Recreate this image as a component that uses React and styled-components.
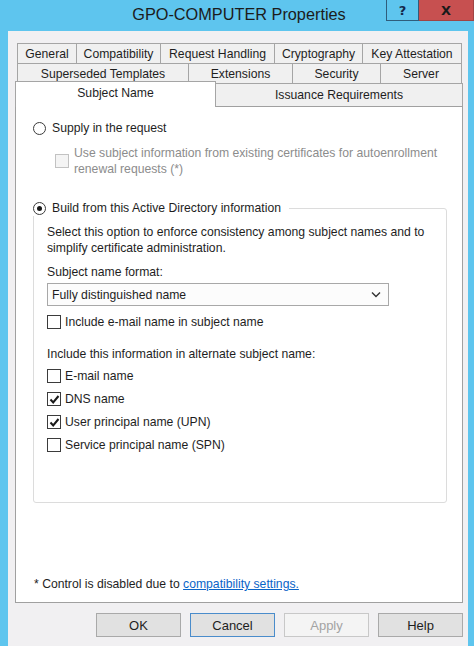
import React from 'react';
import styled, { createGlobalStyle } from 'styled-components';

const GlobalStyle = createGlobalStyle`
  html, body {
    margin: 0;
    padding: 0;
    background: #5ec5ee;
  }
  * {
    box-sizing: border-box;
  }
`;

const font = `"Liberation Sans", Arial, sans-serif`;

const Frame = styled.div`
  width: 474px;
  height: 646px;
  overflow: hidden;
  background: #5ec5ee;
  display: flex;
  flex-direction: column;
  padding-left: 8px;
  font-family: ${font};
  color: #1e1e1e;
`;

const TitleBar = styled.div`
  height: 31px;
  display: grid;
  grid-template-columns: 1fr auto 1fr;
  align-items: start;
  margin-left: -8px;
`;

const Title = styled.div`
  grid-column: 2;
  font-size: 16.3px;
  line-height: 29px;
  color: #1c1c1c;
  padding-left: 4px;
`;

const CaptionButtons = styled.div`
  grid-column: 3;
  justify-self: end;
  display: flex;
`;

const CaptionButton = styled.div`
  width: ${(p) => p.$w}px;
  height: 21px;
  display: flex;
  align-items: center;
  justify-content: center;
  font-family: "DejaVu Sans", sans-serif;
  font-weight: bold;
  font-size: 13px;
  background: ${(p) => (p.$close ? '#c75050' : '#5ec5ee')};
  color: ${(p) => (p.$close ? '#1a1a1a' : '#14284a')};
  border: 1px solid ${(p) => (p.$close ? '#a04444' : '#2f5d7c')};
  border-top: none;
  border-left: ${(p) => (p.$close ? 'none' : '1px solid #2f5d7c')};
`;

const Body = styled.div`
  flex: 1;
  width: 460px;
  background: #f1f0f2;
  padding: 12px 5px 0 7px;
  display: flex;
  flex-direction: column;
  font-size: 12.2px;
`;

const TabStrip = styled.div`
  margin-left: 2px;
  width: 446px;
  display: flex;
  flex-direction: column;
`;

const TabRow = styled.div`
  display: flex;
  height: ${(p) => p.$h || 20}px;
  align-items: flex-end;
`;

const Tab = styled.div`
  width: ${(p) => p.$w}px;
  height: ${(p) => p.$h || 20}px;
  margin-left: -1px;
  display: flex;
  align-items: center;
  justify-content: center;
  line-height: 16px;
  white-space: nowrap;
  background: ${(p) => (p.$active ? '#ffffff' : '#f0f0f0')};
  border: 1px solid #a5a5a5;
  border-bottom: none;
  position: relative;
  z-index: ${(p) => (p.$active ? 2 : 1)};
  margin-bottom: ${(p) => (p.$active ? '-1px' : '0')};
  padding-bottom: ${(p) => (p.$active ? '4px' : '0')};
  &:first-child {
    margin-left: ${(p) => (p.$active ? '-2px' : '0')};
  }
`;

const Panel = styled.div`
  width: 448px;
  height: 497px;
  background: #ffffff;
  border: 1px solid #a0a0a0;
  padding: 13px 15px 10px 17px;
  display: flex;
  flex-direction: column;
  line-height: 16px;
`;

const OptionRow = styled.label`
  display: flex;
  align-items: center;
  gap: ${(p) => p.$gap || 6}px;
  margin-left: ${(p) => p.$indent || 0}px;
  margin-top: ${(p) => p.$mt || 0}px;
  color: ${(p) => (p.$disabled ? '#8c8c8c' : '#1e1e1e')};
  white-space: nowrap;
`;

const Radio = styled.span`
  width: 13px;
  height: 13px;
  flex: none;
  border-radius: 50%;
  border: 1px solid #3b3b3b;
  background: #ffffff;
  display: flex;
  align-items: center;
  justify-content: center;
  &::after {
    content: '';
    width: 5px;
    height: 5px;
    border-radius: 50%;
    background: ${(p) => (p.$checked ? '#1a1a1a' : 'transparent')};
  }
`;

const Box = styled.span`
  width: 14px;
  height: 14px;
  flex: none;
  border: 1px solid ${(p) => (p.$disabled ? '#c2c2c2' : '#3b3b3b')};
  background: ${(p) => (p.$disabled ? '#f4f4f4' : '#ffffff')};
  display: flex;
  align-items: center;
  justify-content: center;
`;

const Group = styled.fieldset`
  margin: 23px 0 0 0;
  padding: 0;
  border: 1px solid #dcdcdc;
  border-radius: 3px;
  min-width: 0;
`;

const Legend = styled.legend`
  padding: 0 8px 0 0;
  margin-left: -1px;
`;

const GroupBody = styled.div`
  padding: 8px 13px 49px 13px;
  display: flex;
  flex-direction: column;
`;

const Text = styled.div`
  margin-top: ${(p) => p.$mt || 0}px;
  white-space: nowrap;
`;

const Select = styled.div`
  margin-top: 3px;
  width: 342px;
  height: 23px;
  border: 1px solid #a8a8a8;
  background: #fcfcfc;
  display: flex;
  align-items: center;
  justify-content: space-between;
  padding: 0 7px 0 4px;
`;

const Footer = styled.div`
  margin-top: auto;
  padding-left: 1px;
`;

const Link = styled.a`
  color: #0a64c8;
  text-decoration: underline;
`;

const ButtonBar = styled.div`
  display: flex;
  justify-content: flex-end;
  gap: 9px;
  margin-top: 10px;
  width: 448px;
`;

const Button = styled.div`
  width: 85px;
  height: 24px;
  display: flex;
  align-items: center;
  justify-content: center;
  font-size: 13px;
  background: ${(p) => (p.$disabled ? '#f4f4f4' : '#e1e1e1')};
  color: ${(p) => (p.$disabled ? '#a3a3a3' : '#1e1e1e')};
  border: 1px solid ${(p) => (p.$default ? '#4a8ccb' : p.$disabled ? '#c8c8c8' : '#a9a9a9')};
`;

function Check({ checked, disabled }) {
  return (
    <Box $disabled={disabled}>
      {checked && (
        <svg width="11" height="11" viewBox="0 0 11 11">
          <path d="M1.5 5.5 L4.2 8.5 L9.5 2" fill="none" stroke="#1a1a1a" strokeWidth="2" />
        </svg>
      )}
    </Box>
  );
}

function Chevron() {
  return (
    <svg width="10" height="7" viewBox="0 0 10 7">
      <path d="M1 1.5 L5 5.5 L9 1.5" fill="none" stroke="#333" strokeWidth="1.4" />
    </svg>
  );
}

const rowOne = [
  ['General', 60],
  ['Compatibility', 85],
  ['Request Handling', 115],
  ['Cryptography', 89],
  ['Key Attestation', 100],
];

const rowTwo = [
  ['Superseded Templates', 172],
  ['Extensions', 105],
  ['Security', 89],
  ['Server', 82],
];

const sanOptions = [
  ['E-mail name', false],
  ['DNS name', true],
  ['User principal name (UPN)', true],
  ['Service principal name (SPN)', false],
];

export default function App() {
  return (
    <>
      <GlobalStyle />
      <Frame>
        <TitleBar>
          <Title>GPO-COMPUTER Properties</Title>
          <CaptionButtons>
            <CaptionButton $w={33}>?</CaptionButton>
            <CaptionButton $w={55} $close>X</CaptionButton>
          </CaptionButtons>
        </TitleBar>
        <Body>
          <TabStrip>
            <TabRow>
              {rowOne.map(([name, w]) => (
                <Tab key={name} $w={w}>{name}</Tab>
              ))}
            </TabRow>
            <TabRow>
              {rowTwo.map(([name, w]) => (
                <Tab key={name} $w={w}>{name}</Tab>
              ))}
            </TabRow>
            <TabRow $h={23}>
              <Tab $w={201} $h={26} $active>Subject Name</Tab>
              <Tab $w={248} $h={23}>Issuance Requirements</Tab>
            </TabRow>
          </TabStrip>
          <Panel>
            <OptionRow>
              <Radio />
              Supply in the request
            </OptionRow>
            <OptionRow $indent={22} $mt={9} $gap={5} $disabled>
              <Check disabled />
              <span>
                Use subject information from existing certificates for autoenrollment
                <br />
                renewal requests (*)
              </span>
            </OptionRow>
            <Group>
              <Legend>
                <OptionRow>
                  <Radio $checked />
                  Build from this Active Directory information
                </OptionRow>
              </Legend>
              <GroupBody>
                <Text>
                  Select this option to enforce consistency among subject names and to
                  <br />
                  simplify certificate administration.
                </Text>
                <Text $mt={8}>Subject name format:</Text>
                <Select>
                  <span>Fully distinguished name</span>
                  <Chevron />
                </Select>
                <OptionRow $mt={8} $gap={4}>
                  <Check />
                  Include e-mail name in subject name
                </OptionRow>
                <Text $mt={16}>Include this information in alternate subject name:</Text>
                {sanOptions.map(([label, checked], i) => (
                  <OptionRow key={label} $mt={i === 0 ? 6 : 7} $gap={4}>
                    <Check checked={checked} />
                    {label}
                  </OptionRow>
                ))}
              </GroupBody>
            </Group>
            <Footer>
              * Control is disabled due to <Link>compatibility settings.</Link>
            </Footer>
          </Panel>
          <ButtonBar>
            <Button>OK</Button>
            <Button $default>Cancel</Button>
            <Button $disabled>Apply</Button>
            <Button>Help</Button>
          </ButtonBar>
        </Body>
      </Frame>
    </>
  );
}
